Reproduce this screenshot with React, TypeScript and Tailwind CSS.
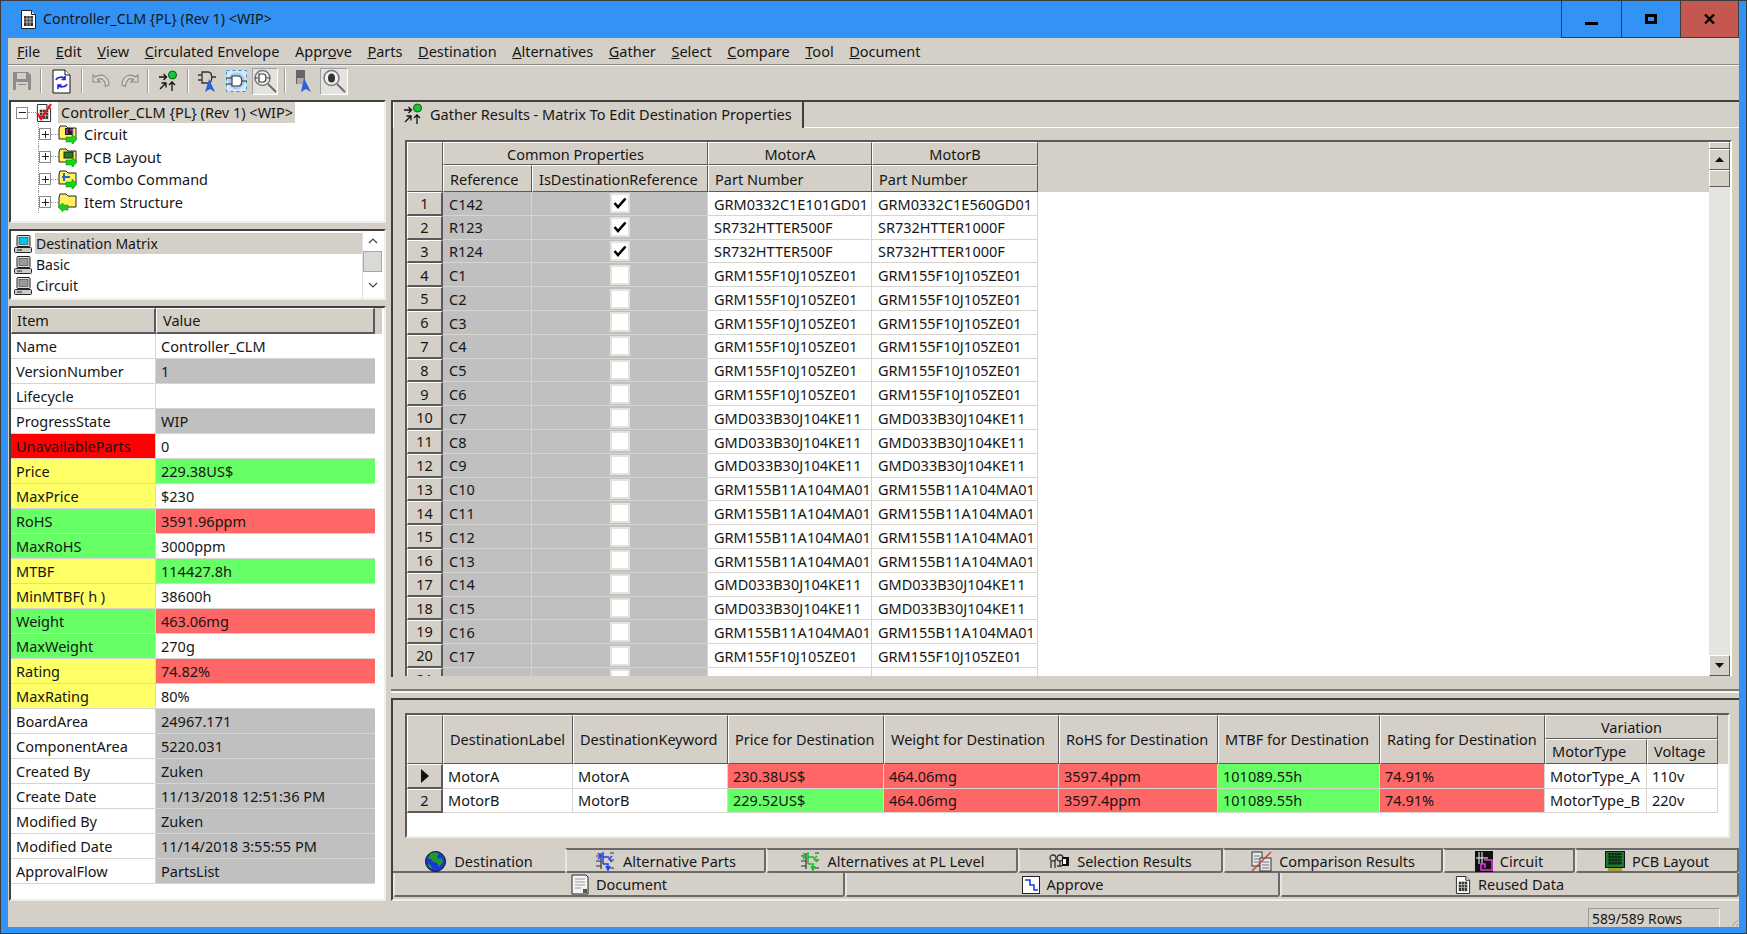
const itemRows = [
  { item: "Name", value: "Controller_CLM", itemBg: "bg-white", valueBg: "bg-white" },
  { item: "VersionNumber", value: "1", itemBg: "bg-white", valueBg: "bg-[#c0c0c0]" },
  { item: "Lifecycle", value: "", itemBg: "bg-white", valueBg: "bg-white" },
  { item: "ProgressState", value: "WIP", itemBg: "bg-white", valueBg: "bg-[#c0c0c0]" },
  { item: "UnavailableParts", value: "0", itemBg: "bg-[#ff0000]", valueBg: "bg-white" },
  { item: "Price", value: "229.38US$", itemBg: "bg-[#ffff66]", valueBg: "bg-[#66ff66]" },
  { item: "MaxPrice", value: "$230", itemBg: "bg-[#ffff66]", valueBg: "bg-white" },
  { item: "RoHS", value: "3591.96ppm", itemBg: "bg-[#66ff66]", valueBg: "bg-[#ff6666]" },
  { item: "MaxRoHS", value: "3000ppm", itemBg: "bg-[#66ff66]", valueBg: "bg-white" },
  { item: "MTBF", value: "114427.8h", itemBg: "bg-[#ffff66]", valueBg: "bg-[#66ff66]" },
  { item: "MinMTBF( h )", value: "38600h", itemBg: "bg-[#ffff66]", valueBg: "bg-white" },
  { item: "Weight", value: "463.06mg", itemBg: "bg-[#66ff66]", valueBg: "bg-[#ff6666]" },
  { item: "MaxWeight", value: "270g", itemBg: "bg-[#66ff66]", valueBg: "bg-white" },
  { item: "Rating", value: "74.82%", itemBg: "bg-[#ffff66]", valueBg: "bg-[#ff6666]" },
  { item: "MaxRating", value: "80%", itemBg: "bg-[#ffff66]", valueBg: "bg-white" },
  { item: "BoardArea", value: "24967.171", itemBg: "bg-white", valueBg: "bg-[#c0c0c0]" },
  { item: "ComponentArea", value: "5220.031", itemBg: "bg-white", valueBg: "bg-[#c0c0c0]" },
  { item: "Created By", value: "Zuken", itemBg: "bg-white", valueBg: "bg-[#c0c0c0]" },
  { item: "Create Date", value: "11/13/2018 12:51:36 PM", itemBg: "bg-white", valueBg: "bg-[#c0c0c0]" },
  { item: "Modified By", value: "Zuken", itemBg: "bg-white", valueBg: "bg-[#c0c0c0]" },
  { item: "Modified Date", value: "11/14/2018 3:55:55 PM", itemBg: "bg-white", valueBg: "bg-[#c0c0c0]" },
  { item: "ApprovalFlow", value: "PartsList", itemBg: "bg-white", valueBg: "bg-[#c0c0c0]" },
];

const F10 = "GRM155F10J105ZE01";
const GMD = "GMD033B30J104KE11";
const B11 = "GRM155B11A104MA01";

const partRows = [
  ["C142", "GRM0332C1E101GD01", "GRM0332C1E560GD01", true],
  ["R123", "SR732HTTER500F", "SR732HTTER1000F", true],
  ["R124", "SR732HTTER500F", "SR732HTTER1000F", true],
  ["C1", F10, F10, false],
  ["C2", F10, F10, false],
  ["C3", F10, F10, false],
  ["C4", F10, F10, false],
  ["C5", F10, F10, false],
  ["C6", F10, F10, false],
  ["C7", GMD, GMD, false],
  ["C8", GMD, GMD, false],
  ["C9", GMD, GMD, false],
  ["C10", B11, B11, false],
  ["C11", B11, B11, false],
  ["C12", B11, B11, false],
  ["C13", B11, B11, false],
  ["C14", GMD, GMD, false],
  ["C15", GMD, GMD, false],
  ["C16", B11, B11, false],
  ["C17", F10, F10, false],
  ["C18", F10, F10, false],
] as const;

const menus = [
  ["", "F", "ile"],
  ["", "E", "dit"],
  ["", "V", "iew"],
  ["", "C", "irculated Envelope"],
  ["Appr", "o", "ve"],
  ["", "P", "arts"],
  ["", "D", "estination"],
  ["", "A", "lternatives"],
  ["", "G", "ather"],
  ["", "S", "elect"],
  ["", "C", "ompare"],
  ["", "T", "ool"],
  ["", "D", "ocument"],
];

const raised = "bg-[#d4d0c8] border border-t-white border-l-white border-r-[#5a5a5a] border-b-[#5a5a5a]";
const headCell = raised + " flex items-center whitespace-nowrap overflow-hidden";
const topHeadCell = headCell + " pt-[2px]";

function SheetIcon({ className = "w-[17px] h-[21px]" }: { className?: string }) {
  return (
    <svg viewBox="0 0 17 21" className={className}>
      <path d="M1.5 1.5h10l4 4v14h-14z" fill="#fff" stroke="#222" />
      <path d="M11.5 1.5v4h4" fill="#ddd" stroke="#222" />
      <rect x="4" y="7" width="9" height="10" fill="#333" />
      <path d="M4 10h9M4 13h9M7 7v10M10 7v10" stroke="#ccc" strokeWidth="0.8" />
    </svg>
  );
}

function SaveIcon() {
  return (
    <svg viewBox="0 0 20 20" className="w-[20px] h-[20px]">
      <path d="M1 1h15l3 3v15H1z" fill="#8d8d8d" />
      <rect x="5" y="2" width="9" height="6" fill="#d4d0c8" />
      <rect x="4" y="11" width="12" height="8" fill="#d4d0c8" />
      <rect x="6" y="13" width="8" height="1" fill="#8d8d8d" />
    </svg>
  );
}

function RefreshDocIcon() {
  return (
    <svg viewBox="0 0 19 25" className="w-[19px] h-[25px]">
      <path d="M1 1h12l5 5v18H1z" fill="#fff" stroke="#111" />
      <path d="M13 1v5h5" fill="#fff" stroke="#111" />
      <path d="M4 11c1-3 7-4 9-1M13 7v3.500h-3.500" fill="none" stroke="#2222dd" strokeWidth="1.600" />
      <path d="M15 15c-1 3-7 4-9 1M6 20v-4h3.500" fill="none" stroke="#2222dd" strokeWidth="1.600" />
    </svg>
  );
}

function UndoIcon({ flip }: { flip?: boolean }) {
  return (
    <svg viewBox="0 0 18 14" className={flip ? "w-[18px] h-[14px] -scale-x-100" : "w-[18px] h-[14px]"}>
      <path d="M1 1v7h7L5.500 5.500C9 3.500 13 5 13.500 12.500L17 11C17 2 9 -1 3.500 3z" fill="#d8d6d0" stroke="#8a8a8a" strokeWidth="1.100" />
    </svg>
  );
}

function GatherIcon() {
  return (
    <svg viewBox="0 0 20 22" className="w-[20px] h-[22px]">
      <circle cx="14.500" cy="5" r="4" fill="#16c838" stroke="#0a5c18" />
      <path d="M1 7h7M5.500 4l3 3-3 3" fill="none" stroke="#111" strokeWidth="1.300" />
      <path d="M2 19l6-6M3.500 13H8v4.500" fill="none" stroke="#111" strokeWidth="1.300" />
      <path d="M14 21v-9M11 15l3-3 3 3" fill="none" stroke="#111" strokeWidth="1.300" />
    </svg>
  );
}

function TraceIcon() {
  return (
    <svg viewBox="0 0 20 24" className="w-[20px] h-[24px]">
      <path d="M1 6h4M1 11h4M5 3h6c5 0 5 11 0 11H5z M15 8h4" fill="none" stroke="#333" strokeWidth="1.300" />
      <path d="M12 10l6 13-5-3-5 3z" fill="#2a62d8" />
    </svg>
  );
}

function SelectBoxIcon() {
  return (
    <svg viewBox="0 0 21 24" className="w-[21px] h-[24px]">
      <rect x="0.500" y="1.500" width="20" height="21" fill="#dbe7f5" stroke="#2a9bd8" strokeDasharray="3 3" />
      <circle cx="10.500" cy="12" r="8.500" fill="#a8cdec" />
      <path d="M0 9h6M0 15h6M6 7h6c5 0 5 10 0 10H6zM16 12h5" fill="#fff" stroke="#333" strokeWidth="1.100" />
    </svg>
  );
}

function MagnifierIcon({ dot }: { dot?: boolean }) {
  return (
    <svg viewBox="0 0 24 24" className="w-[24px] h-[24px]">
      <circle cx="9.500" cy="9" r="7.500" fill="#eef2f7" stroke="#777" strokeWidth="1.500" />
      <path d="M15 15l8 8" stroke="#666" strokeWidth="1.800" />
      {dot ? (
        <ellipse cx="9.500" cy="9" rx="3.500" ry="4.500" fill="#333" />
      ) : (
        <path d="M2 9h3M6 5h4c4 0 4 8 0 8H6zM14 9h3" fill="#fff" stroke="#333" strokeWidth="1.200" />
      )}
    </svg>
  );
}

function PartCursorIcon() {
  return (
    <svg viewBox="0 0 18 24" className="w-[18px] h-[24px]">
      <rect x="1" y="1" width="9" height="14" fill="#666" />
      <rect x="2" y="9" width="7" height="6" fill="#aaa" />
      <path d="M9 9l7 14-5-3-5 3z" fill="#2a62d8" />
    </svg>
  );
}

function FolderIcon({ kind }: { kind: "circuit" | "pcb" | "combo" | "item" }) {
  return (
    <svg viewBox="0 0 20 20" className="w-[20px] h-[20px]">
      <path d="M1 5l1-3h6l2 2h8v11H1z" fill="#fff25c" stroke="#222" />
      {kind === "circuit" && <rect x="7" y="4" width="8" height="7" fill="#222" />}
      {kind === "circuit" && <path d="M9 5v5M12 6h3v4" stroke="#e84ce8" fill="none" />}
      {kind === "pcb" && <rect x="6" y="5" width="9" height="6" fill="#1a7a28" stroke="#222" />}
      {kind === "combo" && <path d="M6 4v8M4 8h8" stroke="#2a62d8" strokeWidth="2" />}
      {kind === "item" ? (
        <path d="M0 15l5-4v2h5v5H5v2z" fill="#19d319" stroke="#0a7a0a" strokeWidth="0.500" />
      ) : (
        <path d="M19 15l-5-5v3H8v5h6v3z" fill="#19d319" stroke="#0a7a0a" strokeWidth="0.500" />
      )}
    </svg>
  );
}

function ComputerIcon({ active }: { active?: boolean }) {
  return (
    <svg viewBox="0 0 18 18" className="w-[18px] h-[18px]">
      <rect x="3" y="0.500" width="13" height="11" rx="1" fill="#ddd" stroke="#222" />
      <rect x="5" y="2.500" width="9" height="7" fill={active ? "#00c8e8" : "#9a9a9a"} stroke="#222" strokeWidth="0.500" />
      <rect x="0.500" y="12.500" width="17" height="5" rx="1" fill="#ccc" stroke="#222" />
      <path d="M3 15h5" stroke="#222" />
    </svg>
  );
}

function GlobeIcon() {
  return (
    <svg viewBox="0 0 21 21" className="w-[21px] h-[21px]">
      <circle cx="10.500" cy="10.500" r="10" fill="#1638d8" stroke="#111" />
      <path d="M5 3c3-2 7-2 9 0l-2 3 2 2 3-1 1 4-4 5-2-4-4-1-2-3-3 0z" fill="#1f9a2c" />
      <path d="M3 13l3 1 1 4-3-2z" fill="#1f9a2c" />
    </svg>
  );
}

function AltPartsIcon({ color }: { color: string }) {
  return (
    <svg viewBox="0 0 21 21" className="w-[21px] h-[21px]">
      <path d="M1 5h5M1 10h5M1 15h5M6 2v16M15 2h4M15 9h4M15 17h4" fill="none" stroke="#333" strokeWidth="1.200" />
      <path d="M8 1v12M8 6h6M8 13h5v6M3 2l3 3-3 3M17 5l-3 3 3 3M15 15l-2 4-2-4" fill="none" stroke={color} strokeWidth="1.500" />
    </svg>
  );
}

function SelectionIcon() {
  return (
    <svg viewBox="0 0 21 16" className="w-[21px] h-[16px]">
      <circle cx="4" cy="5" r="3" fill="none" stroke="#333" strokeWidth="1.300" />
      <path d="M2 8v7M6 8v7" stroke="#333" strokeWidth="1.300" />
      <circle cx="11" cy="5" r="3" fill="none" stroke="#333" strokeWidth="1.300" />
      <path d="M8 13h5M11 8v5" stroke="#333" strokeWidth="1.300" />
      <rect x="13" y="4" width="7" height="9" fill="#111" />
      <rect x="14" y="6" width="3" height="5" fill="#fff" />
    </svg>
  );
}

function CompareIcon() {
  return (
    <svg viewBox="0 0 21 21" className="w-[21px] h-[21px]">
      <rect x="1" y="1" width="10" height="14" fill="#e8e8e8" stroke="#333" />
      <rect x="9" y="7" width="11" height="13" fill="#e8e8e8" stroke="#333" />
      <path d="M3 5h6M3 8h6M3 11h6M11 11h7M11 14h7M11 17h7" stroke="#777" />
      <path d="M1 20L20 1" stroke="#c8402c" strokeWidth="1.300" />
    </svg>
  );
}

function CircuitIcon() {
  return (
    <svg viewBox="0 0 18 21" className="w-[18px] h-[21px]">
      <rect width="18" height="21" fill="#111" />
      <path d="M4 1v12M7 1v12M1 7h12" stroke="#fff" />
      <path d="M9 9h8v10H6v-6h4v4" fill="none" stroke="#f030f0" strokeWidth="1.500" />
    </svg>
  );
}

function PcbIcon() {
  return (
    <svg viewBox="0 0 20 21" className="w-[20px] h-[21px]">
      <rect x="0.500" y="0.500" width="19" height="16" fill="#1e7a2a" stroke="#112" />
      <path d="M3 3h14M3 6h14M3 9h14M3 12h14M5 2v12M8 2v12M11 2v12M14 2v12" stroke="#0c2a12" strokeWidth="1.300" />
      <rect x="3" y="17" width="14" height="3" fill="#a8a030" />
    </svg>
  );
}

function DocumentIcon() {
  return (
    <svg viewBox="0 0 18 21" className="w-[18px] h-[21px]">
      <path d="M1 1h14l2 2v17H1z" fill="#f4f4f4" stroke="#222" />
      <path d="M4 5h10M4 8h10M4 11h10M4 14h6" stroke="#999" />
      <rect x="12" y="15" width="4" height="4" fill="#555" />
    </svg>
  );
}

function ApproveIcon() {
  return (
    <svg viewBox="0 0 18 18" className="w-[18px] h-[18px]">
      <rect x="0.500" y="0.500" width="17" height="17" fill="#fff" stroke="#222" />
      <path d="M3 4h5v5h4v5h4" fill="none" stroke="#1a3ad8" strokeWidth="1.500" />
    </svg>
  );
}

function TreeBox({ open }: { open?: boolean }) {
  return (
    <span className="relative flex items-center justify-center w-[12px] h-[12px] bg-white border border-[#8a8a8a] shrink-0">
      <span className="w-[7px] h-[1px] bg-[#222]" />
      {!open && <span className="absolute w-[1px] h-[7px] bg-[#222]" />}
    </span>
  );
}

function ScrollButton({ up }: { up?: boolean }) {
  return (
    <div className={raised + " flex items-center justify-center h-[21px] shrink-0"}>
      <svg viewBox="0 0 9 5" className="w-[9px] h-[5px]">
        <path d={up ? "M4.500 0L9 5H0z" : "M0 0h9L4.500 5z"} fill="#111" />
      </svg>
    </div>
  );
}

function TreeRow({ icon, label }: { icon: React.ReactNode; label: string }) {
  return (
    <div className="flex items-center h-[22.6px] pl-[4px]">
      <span className="w-[19px] h-full border-r border-dotted border-[#999] shrink-0" />
      <span className="w-[5px] h-0 border-t border-dotted border-[#999] shrink-0" />
      <span className="-ml-[5px]"><TreeBox /></span>
      <span className="w-[7px] h-0 border-t border-dotted border-[#999] shrink-0" />
      {icon}
      <span className="ml-[6px]">{label}</span>
    </div>
  );
}

function ToolSep() {
  return <span className="block w-[2px] h-[24px] bg-[#9a9a9a] border-r border-white shrink-0" />;
}

function BottomTab({ w, icon, label, top, last }: { w: string; icon: React.ReactNode; label: string; top?: boolean; last?: boolean }) {
  const edges = top
    ? "border-t-2 border-l-2 border-r-2 border-b-2 border-t-[#6a6a6a] border-l-[#e8e6e0] border-r-[#6a6a6a] border-b-[#6a6a6a] rounded-b-[3px] h-[25px]"
    : "border-l-2 border-r-2 border-b-2 border-l-[#e8e6e0] border-r-[#6a6a6a] border-b-[#6a6a6a] rounded-b-[3px] h-[24px]";
  return (
    <div className={w + " " + edges + " flex items-center justify-center gap-[7px] pt-[1px] shrink-0" + (last ? " border-r-0" : "")}>
      {icon}
      <span>{label}</span>
    </div>
  );
}

export default function App() {
  return (
    <div className="w-[1747px] h-[934px] flex flex-col overflow-hidden bg-[#3393f5] border border-[#3c3c3c] text-[14.5px] leading-none text-[#161616] font-['Noto_Sans',sans-serif]">
      {/* title bar */}
      <div className="flex items-stretch h-[37px] shrink-0">
        <div className="flex items-center flex-1 pl-[19px] gap-[6px] text-[14.3px]">
          <SheetIcon />
          <span>Controller_CLM {"{PL}"} (Rev 1) {"<WIP>"}</span>
        </div>
        <div className="flex pr-[7px]">
          <div className="w-[60px] flex items-center justify-center border-l border-b border-[#2c3e50]">
            <span className="w-[13px] h-[3px] bg-black mt-[8px]" />
          </div>
          <div className="w-[59px] flex items-center justify-center border-l border-b border-[#2c3e50]">
            <span className="w-[12px] h-[10px] border-[3px] border-black" />
          </div>
          <div className="w-[59px] flex items-center justify-center border-l border-b border-r border-[#3c3c3c] bg-[#c4574f]">
            <svg viewBox="0 0 11 10" className="w-[11px] h-[10px]">
              <path d="M1 0.500l9 9M10 0.500l-9 9" stroke="#000" strokeWidth="2.400" />
            </svg>
          </div>
        </div>
      </div>

      <div className="flex flex-col flex-1 mx-[7px] mb-[6px] bg-[#d4d0c8] min-h-0">
        {/* menu */}
        <div className="flex items-center h-[27px] pl-[9px] gap-[15.6px] shrink-0 border-b border-b-[#8a8a8a]">
          {menus.map(([pre, key, post], i) => (
            <span key={i} className="whitespace-nowrap">
              {pre}
              <u>{key}</u>
              {post}
            </span>
          ))}
        </div>

        {/* toolbar */}
        <div className="flex items-center h-[35px] pl-[4px] pb-[4px] shrink-0 border-t border-t-[#f0f0f0]">
          <span className="flex w-[20px]"><SaveIcon /></span>
          <span className="ml-[8px]"><ToolSep /></span>
          <span className="ml-[10px] flex"><RefreshDocIcon /></span>
          <span className="ml-[10px]"><ToolSep /></span>
          <span className="ml-[9px] flex"><UndoIcon /></span>
          <span className="ml-[11px] flex"><UndoIcon flip /></span>
          <span className="ml-[8px]"><ToolSep /></span>
          <span className="ml-[9px] flex"><GatherIcon /></span>
          <span className="ml-[9px]"><ToolSep /></span>
          <span className="ml-[8px] flex"><TraceIcon /></span>
          <span className="ml-[9px] flex"><SelectBoxIcon /></span>
          <span className="ml-[5px] flex items-center justify-center w-[26px] h-[27px] bg-[#e4e2dd] border border-t-[#a0a0a0] border-l-[#a0a0a0] border-r-white border-b-white"><MagnifierIcon /></span>
          <span className="ml-[6px]"><ToolSep /></span>
          <span className="ml-[9px] flex"><PartCursorIcon /></span>
          <span className="ml-[7px] flex items-center justify-center w-[28px] h-[27px] bg-[#e4e2dd] border border-t-[#a0a0a0] border-l-[#a0a0a0] border-r-white border-b-white"><MagnifierIcon dot /></span>
        </div>

        {/* main */}
        <div className="flex flex-1 min-h-0">
          {/* left column */}
          <div className="flex flex-col w-[377px] shrink-0 ml-[1px] gap-[6px]">
            <div className="h-[123px] shrink-0 bg-white border-t-2 border-l-2 border-t-[#404040] border-l-[#404040] border-r-2 border-b-2 border-r-[#f0eee8] border-b-[#f0eee8] pl-[5px]">
              <div className="flex items-center h-[21px]">
                <TreeBox open />
                <span className="w-[8px] h-0 border-t border-dotted border-[#999]" />
                <span className="relative flex">
                  <SheetIcon className="w-[16px] h-[20px]" />
                  <svg viewBox="0 0 18 18" className="absolute -left-[1px] top-0 w-[18px] h-[18px]">
                    <path d="M2 10l4 6L16 1" fill="none" stroke="#ee1111" strokeWidth="2.200" />
                  </svg>
                </span>
                <span className="ml-[6px] flex items-center h-[21px] w-[237px] pl-[3px] bg-[#d4d0c8]">Controller_CLM {"{PL}"} (Rev 1) {"<WIP>"}</span>
              </div>
              <TreeRow icon={<FolderIcon kind="circuit" />} label="Circuit" />
              <TreeRow icon={<FolderIcon kind="pcb" />} label="PCB Layout" />
              <TreeRow icon={<FolderIcon kind="combo" />} label="Combo Command" />
              <TreeRow icon={<FolderIcon kind="item" />} label="Item Structure" />
            </div>

            <div className="flex h-[71px] shrink-0 bg-white border-t-2 border-l-2 border-t-[#404040] border-l-[#404040] border-r-2 border-b-2 border-r-[#f0eee8] border-b-[#f0eee8]">
              <div className="flex-1 pl-[3px] pt-[2px] text-[14px]">
                {["Destination Matrix", "Basic", "Circuit"].map((label, i) => (
                  <div key={label} className="flex items-center h-[21px] gap-[3px]">
                    <ComputerIcon active={i === 0} />
                    <span className={i === 0 ? "flex items-center h-[21px] flex-1 pl-[1px] bg-[#d4d0c8]" : "pl-[1px]"}>{label}</span>
                  </div>
                ))}
              </div>
              <div className="w-[20px] flex flex-col mr-[2px] shrink-0 border-l border-[#e0e0e0]">
                <div className="h-[20px] flex items-center justify-center">
                  <svg viewBox="0 0 10 6" className="w-[10px] h-[6px]"><path d="M1 5l4-4 4 4" fill="none" stroke="#444" strokeWidth="1.200" /></svg>
                </div>
                <div className="h-[21px] bg-[#dbd9d4] border border-[#a8a8a8]" />
                <div className="flex-1 flex items-center justify-center">
                  <svg viewBox="0 0 10 6" className="w-[10px] h-[6px]"><path d="M1 1l4 4 4-4" fill="none" stroke="#444" strokeWidth="1.200" /></svg>
                </div>
              </div>
            </div>

            <div className="flex-1 min-h-0 bg-white border-t-2 border-l-2 border-t-[#404040] border-l-[#404040] border-r-2 border-b-2 border-r-[#f0eee8] border-b-[#f0eee8]">
              <div className="flex h-[26px] bg-[#d4d0c8] w-[371px]">
                <div className={raised + " flex items-center w-[145px] pl-[5px] border-r-2 border-b-2"}>Item</div>
                <div className={raised + " flex items-center w-[219px] pl-[6px] border-r-2 border-b-2"}>Value</div>
              </div>
              {itemRows.map((row) => (
                <div key={row.item} className="grid grid-cols-[145px_219px] w-[364px] h-[25px]">
                  <div className={row.itemBg + " flex items-center pl-[5px] border-r border-b border-[#d8d5ce]"}>{row.item}</div>
                  <div className={row.valueBg + " flex items-center pl-[5px] border-b border-[#d8d5ce]"}>{row.value}</div>
                </div>
              ))}
            </div>
          </div>

          {/* right column */}
          <div className="flex flex-col flex-1 min-w-0 ml-[5px]">
            <div className="flex flex-col h-[577px] shrink-0 border-t-2 border-l-2 border-t-[#404040] border-l-[#404040]">
              <div className="flex h-[26px] shrink-0">
                <div className="flex items-center w-[411px] h-[26px] pl-[9px] pb-[2px] gap-[7px] border-r-2 border-[#404040] border-l border-l-white">
                  <GatherIcon />
                  <span>Gather Results - Matrix To Edit Destination Properties</span>
                </div>
                <div className="flex-1 border-b border-white" />
              </div>

              <div className="flex h-[536px] mt-[12px] ml-[12px] mr-[7px] border-t-2 border-l-2 border-[#5a5a5a] border-r-2 border-r-white overflow-hidden">
                <div className="flex-1 min-w-0 bg-white overflow-hidden">
                  <div className="grid grid-cols-[36px_89px_176px_164px_166px_1fr] grid-rows-[23px_27px] bg-[#d4d0c8]">
                    <div className={raised + " row-span-2"} />
                    <div className={topHeadCell + " col-span-2 justify-center"}>Common Properties</div>
                    <div className={topHeadCell + " justify-center"}>MotorA</div>
                    <div className={topHeadCell + " justify-center"}>MotorB</div>
                    <div className="row-span-2" />
                    <div className={topHeadCell + " pl-[6px]"}>Reference</div>
                    <div className={topHeadCell + " pl-[6px]"}>IsDestinationReference</div>
                    <div className={topHeadCell + " pl-[6px]"}>Part Number</div>
                    <div className={topHeadCell + " pl-[6px]"}>Part Number</div>
                  </div>
                  {partRows.map(([ref, a, b, checked], i) => (
                    <div key={ref} className="grid grid-cols-[36px_89px_176px_164px_166px] h-[23.8px] bg-white">
                      <div className={raised + " flex items-center justify-center border-r-2 border-b-2"}>{i + 1}</div>
                      <div className="flex items-center pl-[6px] pt-[1px] bg-[#c0c0c0] border-r border-b border-[#d8d5ce]">{ref}</div>
                      <div className="flex items-center justify-center bg-[#c0c0c0] border-r border-b border-[#d8d5ce]">
                        <span className="flex items-center justify-center w-[20px] h-[20px] bg-white border-2 border-[#e4e2dc]">
                          {checked && (
                            <svg viewBox="0 0 14 12" className="w-[14px] h-[12px]">
                              <path d="M1.500 6l3.500 4L12.500 1.500" fill="none" stroke="#000" strokeWidth="2.600" />
                            </svg>
                          )}
                        </span>
                      </div>
                      <div className="flex items-center pl-[6px] pt-[1px] whitespace-nowrap overflow-hidden border-r border-b border-[#d8d5ce]">{a}</div>
                      <div className="flex items-center pl-[6px] pt-[1px] whitespace-nowrap overflow-hidden border-r border-b border-[#d8d5ce]">{b}</div>
                    </div>
                  ))}
                </div>
                <div className="flex flex-col w-[21px] shrink-0 bg-[#e6e4df]">
                  <div className={raised + " h-[7px] shrink-0"} />
                  <ScrollButton up />
                  <div className={raised + " h-[17px] shrink-0"} />
                  <div className="flex-1" />
                  <ScrollButton />
                </div>
              </div>
            </div>

            {/* splitter */}
            <div className="h-[12px] shrink-0" />
            <div className="h-[2px] shrink-0 bg-[#7a7a7a]" />
            <div className="h-[2px] shrink-0 bg-[#f4f4f0]" />

            <div className="flex flex-col flex-1 min-h-0 mt-[5px] border-t-2 border-l-2 border-t-[#404040] border-l-[#404040] border-b-2 border-b-[#f0eee8]">
              <div className="flex flex-col h-[125px] mt-[13px] ml-[12px] mr-[9px] shrink-0 bg-white border-t-2 border-l-2 border-[#5a5a5a] border-r-2 border-r-[#f0eee8] border-b-2 border-b-[#f0eee8]">
                <div className="grid grid-cols-[36px_130px_155px_156px_175px_159px_162px_165px_102px_71px_1fr] grid-rows-[24px_25px] bg-[#d4d0c8]">
                  <div className={raised + " row-span-2"} />
                  <div className={headCell + " row-span-2 pl-[6px]"}>DestinationLabel</div>
                  <div className={headCell + " row-span-2 pl-[6px]"}>DestinationKeyword</div>
                  <div className={headCell + " row-span-2 pl-[6px]"}>Price for Destination</div>
                  <div className={headCell + " row-span-2 pl-[6px]"}>Weight for Destination</div>
                  <div className={headCell + " row-span-2 pl-[6px]"}>RoHS for Destination</div>
                  <div className={headCell + " row-span-2 pl-[6px]"}>MTBF for Destination</div>
                  <div className={headCell + " row-span-2 pl-[6px]"}>Rating for Destination</div>
                  <div className={headCell + " col-span-2 justify-center"}>Variation</div>
                  <div className="row-span-2" />
                  <div className={headCell + " pl-[6px]"}>MotorType</div>
                  <div className={headCell + " pl-[6px]"}>Voltage</div>
                </div>
                {[
                  { id: "MotorA", price: "230.38US$", priceBg: "bg-[#ff6666]", type: "MotorType_A", volt: "110v" },
                  { id: "MotorB", price: "229.52US$", priceBg: "bg-[#66ff66]", type: "MotorType_B", volt: "220v" },
                ].map((d, i) => (
                  <div key={d.id} className="grid grid-cols-[36px_130px_155px_156px_175px_159px_162px_165px_102px_71px] h-[24.500px]">
                    <div className={raised + " flex items-center justify-center border-r-2 border-b-2"}>
                      {i === 0 ? (
                        <svg viewBox="0 0 8 14" className="w-[8px] h-[14px]"><path d="M0 0l8 7-8 7z" fill="#111" /></svg>
                      ) : (
                        "2"
                      )}
                    </div>
                    <div className="flex items-center pl-[5px] border-r border-b border-[#d8d5ce]">{d.id}</div>
                    <div className="flex items-center pl-[5px] border-r border-b border-[#d8d5ce]">{d.id}</div>
                    <div className={d.priceBg + " flex items-center pl-[5px] border-r border-b border-[#d8d5ce]"}>{d.price}</div>
                    <div className="flex items-center pl-[5px] bg-[#ff6666] border-r border-b border-[#d8d5ce]">464.06mg</div>
                    <div className="flex items-center pl-[5px] bg-[#ff6666] border-r border-b border-[#d8d5ce]">3597.4ppm</div>
                    <div className="flex items-center pl-[5px] bg-[#66ff66] border-r border-b border-[#d8d5ce]">101089.55h</div>
                    <div className="flex items-center pl-[5px] bg-[#ff6666] border-r border-b border-[#d8d5ce]">74.91%</div>
                    <div className="flex items-center pl-[5px] whitespace-nowrap overflow-hidden border-r border-b border-[#d8d5ce]">{d.type}</div>
                    <div className="flex items-center pl-[5px] border-r border-b border-[#d8d5ce]">{d.volt}</div>
                  </div>
                ))}
              </div>

              <div className="flex mt-[10px] shrink-0">
                <div className="flex items-center justify-center gap-[8px] w-[172px] h-[25px] pt-[4px] border-b-2 border-b-[#6a6a6a]">
                  <GlobeIcon />
                  <span>Destination</span>
                </div>
                <BottomTab top w="w-[201px]" icon={<AltPartsIcon color="#1a3ef0" />} label="Alternative Parts" />
                <BottomTab top w="w-[252px]" icon={<AltPartsIcon color="#10c020" />} label="Alternatives at PL Level" />
                <BottomTab top w="w-[205px]" icon={<SelectionIcon />} label="Selection Results" />
                <BottomTab top w="w-[220px]" icon={<CompareIcon />} label="Comparison Results" />
                <BottomTab top w="w-[132px]" icon={<CircuitIcon />} label="Circuit" />
                <BottomTab top last w="flex-1" icon={<PcbIcon />} label="PCB Layout" />
              </div>
              <div className="flex shrink-0">
                <BottomTab w="w-[452px]" icon={<DocumentIcon />} label="Document" />
                <BottomTab w="w-[435px]" icon={<ApproveIcon />} label="Approve" />
                <BottomTab last w="flex-1" icon={<SheetIcon className="w-[16px] h-[20px]" />} label="Reused Data" />
              </div>
            </div>
          </div>
        </div>

        {/* status bar */}
        <div className="flex justify-end items-end h-[26px] shrink-0">
          <div className="flex items-center w-[132px] h-[19px] pl-[3px] pt-[1px] text-[13.8px] border-t border-l border-[#9a9a9a] border-r border-r-[#f0f0f0]">589/589 Rows</div>
          <svg viewBox="0 0 19 19" className="w-[19px] h-[19px]">
            <path d="M18 12l-6 6M18 16l-2 2" stroke="#9a9a9a" />
          </svg>
        </div>
      </div>
    </div>
  );
}
